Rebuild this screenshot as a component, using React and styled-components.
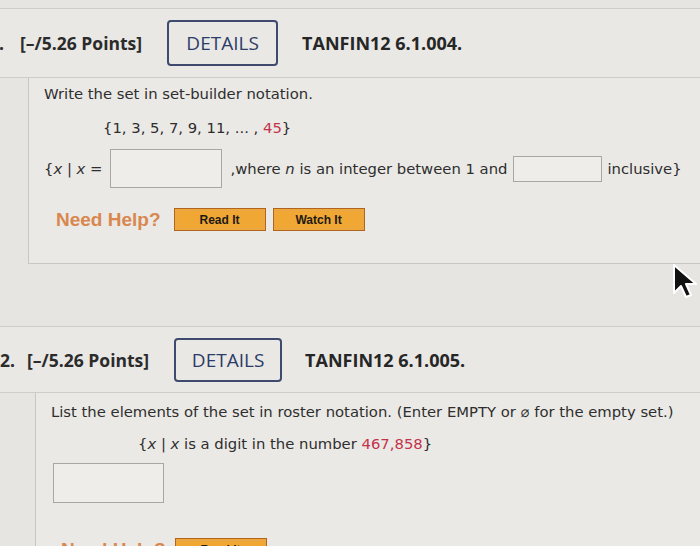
import React from "react";
import styled, { createGlobalStyle } from "styled-components";

const Global = createGlobalStyle`
    html, body {
        margin:0;
        padding:0;
        background:#e7e5e2;
    }
    body {
        width:700px;
        height:546px;
        overflow:hidden;
        position:relative;
    }
`;

const Page = styled.div`
    display:flex;
    flex-direction:column;
    width:700px;
    padding-top:${props => props.top}px;
`;

const Section = styled.div`
    display:flex;
    flex-direction:column;
    margin-bottom:${props => props.gap || 0}px;
`;

const Header = styled.div`
    display:flex;
    align-items:center;
    height:${props => props.h}px;
    border-top:1px solid #cfcdca;
    border-bottom:1px solid #cfcdca;
    background:#e9e8e5;
    overflow:hidden;
    font-family:"Open Sans", sans-serif;
`;

const Points = styled.span`
    margin-left:${props => props.shift || 0}px;
    font-size:17.5px;
    font-weight:700;
    color:#2b2b2b;
    white-space:nowrap;
`;

const Num = styled.span`
    margin-right:${props => props.gap}px;
`;

const Details = styled.button`
    margin-left:${props => props.ml}px;
    width:${props => props.w}px;
    height:${props => props.h}px;
    flex-shrink:0;
    box-sizing:border-box;
    border:2px solid #3e4a6e;
    border-radius:4px;
    background:transparent;
    font-family:"Open Sans", sans-serif;
    font-size:19px;
    color:#2c3c68;
    padding:0;
`;

const Code = styled.span`
    margin-left:${props => props.ml}px;
    font-size:18px;
    font-weight:700;
    color:#262626;
    white-space:nowrap;
`;

const EdgeButton = styled.div`
    margin-left:auto;
    margin-right:-${props => props.hidden}px;
    flex-shrink:0;
    box-sizing:border-box;
    width:${props => props.w}px;
    height:${props => props.h}px;
    border:2px solid #3e4a6e;
    border-radius:4px;
`;

const Body = styled.div`
    margin-left:${props => props.indent}px;
    height:${props => props.h}px;
    border-left:1px solid #c9c7c4;
    border-bottom:${props => props.noBottom ? "none" : "1px solid #c9c7c4"};
    background:#ebe9e6;
    padding:${props => props.pt}px 0 0 ${props => props.pl}px;
    display:flex;
    flex-direction:column;
    font-family:"DejaVu Sans", Verdana, sans-serif;
    font-size:14.8px;
    line-height:18px;
    color:#2e2e2e;
    box-sizing:border-box;
`;

const Line = styled.div`
    display:flex;
    align-items:center;
    margin-left:${props => props.ml || 0}px;
    margin-top:${props => props.mt || 0}px;
    white-space:pre;
`;

const Red = styled.span`
    color:#c2344a;
`;

const Var = styled.i`
    font-style:italic;
`;

const Blank = styled.div`
    width:${props => props.w}px;
    height:${props => props.h}px;
    margin:${props => props.mt || 0}px ${props => props.mr || 0}px 0 ${props => props.ml || 0}px;
    border:1px solid #a9a7a4;
    background:#eeedea;
    box-sizing:border-box;
    flex-shrink:0;
`;

const HelpRow = styled.div`
    display:flex;
    align-items:center;
    margin-left:${props => props.ml}px;
    margin-top:${props => props.mt}px;
    font-family:"Liberation Sans", Arial, sans-serif;
`;

const NeedHelp = styled.span`
    font-size:19px;
    font-weight:700;
    color:#d8874e;
    margin-right:${props => props.mr || 13}px;
`;

const HelpButton = styled.div`
    width:${props => props.w}px;
    height:23px;
    margin-right:7px;
    box-sizing:border-box;
    border:1px solid #b0641f;
    outline:1px solid #e8a64a;
    outline-offset:-3px;
    background:#f1a733;
    display:flex;
    align-items:center;
    justify-content:center;
    font-size:12px;
    font-weight:700;
    color:#1d1a16;
`;

const Cursor = styled.svg`
    position:absolute;
    left:671px;
    top:263px;
`;

const App = () => (
    <>
        <Global />
        <Page top={8}>
            <Section gap={62}>
                <Header h={68}>
                    <Points shift={-11}><Num gap={16}>1.</Num>[–/5.26 Points]</Points>
                    <Details ml={25} w={111} h={46}>DETAILS</Details>
                    <Code ml={24}>TANFIN12 6.1.004.</Code>
                    <EdgeButton w={43} h={40} hidden={40} />
                </Header>
                <Body indent={28} h={186} pt={7} pl={15}>
                    <Line>Write the set in set-builder notation.</Line>
                    <Line ml={59} mt={16}>
                        {"{1, 3, 5, 7, 9, 11, ... , "}<Red>45</Red>{"}"}
                    </Line>
                    <Line mt={12}>
                        {"{"}<Var>x</Var>{" | "}<Var>x</Var>{" ="}
                        <Blank w={112} h={39} ml={8} mr={8} />
                        {",where "}<Var>n</Var>{" is an integer between 1 and"}
                        <Blank w={89} h={26} ml={6} mr={5} />
                        {"inclusive}"}
                    </Line>
                    <HelpRow ml={12} mt={20}>
                        <NeedHelp>Need Help?</NeedHelp>
                        <HelpButton w={92}>Read It</HelpButton>
                        <HelpButton w={92}>Watch It</HelpButton>
                    </HelpRow>
                </Body>
            </Section>
            <Section>
                <Header h={65}>
                    <Points><Num gap={12}>2.</Num>[–/5.26 Points]</Points>
                    <Details ml={25} w={108} h={44}>DETAILS</Details>
                    <Code ml={23}>TANFIN12 6.1.005.</Code>
                    <EdgeButton w={52} h={42} hidden={41} />
                </Header>
                <Body indent={35} h={160} pt={10} pl={15} noBottom>
                    <Line>List the elements of the set in roster notation. (Enter EMPTY or ⌀ for the empty set.)</Line>
                    <Line ml={87} mt={14}>
                        {"{"}<Var>x</Var>{" | "}<Var>x</Var>{" is a digit in the number "}<Red>467,858</Red>{"}"}
                    </Line>
                    <Blank w={111} h={40} ml={2} mt={10} />
                    <HelpRow ml={10} mt={35}>
                        <NeedHelp mr={9}>Need Help?</NeedHelp>
                        <HelpButton w={92}>Read It</HelpButton>
                    </HelpRow>
                </Body>
            </Section>
        </Page>
        <Cursor width="30" height="40" viewBox="0 0 30 40">
            <path d="M3 2 L3 30 L10 23 L15 34 L20 32 L15 21 L25 21 Z" fill="#111" stroke="#fff" strokeWidth="2" strokeLinejoin="round" />
        </Cursor>
    </>
);

export default App;
